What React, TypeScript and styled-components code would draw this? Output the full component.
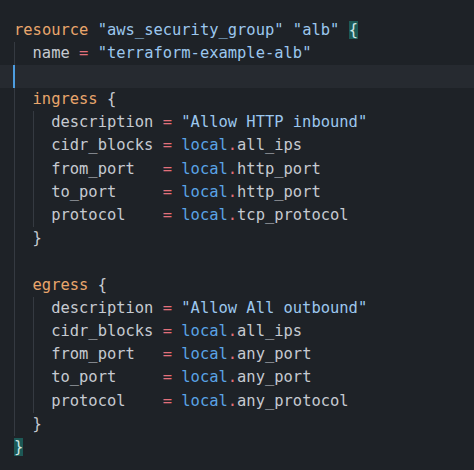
import React from "react";
import styled, { createGlobalStyle } from "styled-components";

const Global = createGlobalStyle`
  html, body { margin: 0; padding: 0; background: #1e2227; }
  #root { width: 474px; height: 470px; overflow: hidden; }
`;

const Editor = styled.div`
  box-sizing: border-box;
  width: 474px;
  height: 470px;
  background: #1e2227;
  padding: 18.5px 0 0 0;
  font-family: "DejaVu Sans Mono", "Liberation Mono", monospace;
  font-size: 15.45px;
  color: #c6cad1;
  white-space: pre;
`;

const Line = styled.div<{ $current?: boolean }>`
  position: relative;
  height: 23.2px;
  line-height: 23.2px;
  padding-left: 14px;
  background: ${(p) => (p.$current ? "#262a30" : "transparent")};
`;

const Indent = styled.span`
  display: inline-block;
  vertical-align: top;
  width: 2ch;
  height: 23.2px;
  box-sizing: border-box;
  border-left: 1px solid #353a41;
`;

const Cursor = styled.span`
  position: absolute;
  left: 13px;
  top: 0;
  width: 2px;
  height: 23.2px;
  background: #4d9de0;
`;

const Kw = styled.span`
  color: #e9a66c;
`;
const Str = styled.span`
  color: #9cc7ee;
`;
const Op = styled.span`
  color: #e2707a;
`;
const Local = styled.span`
  color: #5aa4e6;
`;
const Ident = styled.span`
  color: #c6cad1;
`;
const Match = styled.span`
  background: #1d5956;
  color: #cfe6e4;
`;

type Seg = React.ReactNode;

const attr = (name: string, pad: number, value: Seg) => (
  <>
    <Ident>{name.padEnd(pad, " ")}</Ident>
    <Op>{" = "}</Op>
    {value}
  </>
);

const loc = (name: string) => (
  <>
    <Local>local</Local>
    <Op>.</Op>
    <Ident>{name}</Ident>
  </>
);

const rows: { indent: number; content: Seg; current?: boolean }[] = [
  {
    indent: 0,
    content: (
      <>
        <Kw>resource</Kw>
        {" "}
        <Str>"aws_security_group"</Str>
        {" "}
        <Str>"alb"</Str>
        {" "}
        <Match>{"{"}</Match>
      </>
    ),
  },
  { indent: 1, content: attr("name", 4, <Str>"terraform-example-alb"</Str>) },
  { indent: 0, content: null, current: true },
  {
    indent: 1,
    content: (
      <>
        <Kw>ingress</Kw>
        <Ident>{" {"}</Ident>
      </>
    ),
  },
  { indent: 2, content: attr("description", 11, <Str>"Allow HTTP inbound"</Str>) },
  { indent: 2, content: attr("cidr_blocks", 11, loc("all_ips")) },
  { indent: 2, content: attr("from_port", 11, loc("http_port")) },
  { indent: 2, content: attr("to_port", 11, loc("http_port")) },
  { indent: 2, content: attr("protocol", 11, loc("tcp_protocol")) },
  { indent: 1, content: <Ident>{"}"}</Ident> },
  { indent: 1, content: null },
  {
    indent: 1,
    content: (
      <>
        <Kw>egress</Kw>
        <Ident>{" {"}</Ident>
      </>
    ),
  },
  { indent: 2, content: attr("description", 11, <Str>"Allow All outbound"</Str>) },
  { indent: 2, content: attr("cidr_blocks", 11, loc("all_ips")) },
  { indent: 2, content: attr("from_port", 11, loc("any_port")) },
  { indent: 2, content: attr("to_port", 11, loc("any_port")) },
  { indent: 2, content: attr("protocol", 11, loc("any_protocol")) },
  { indent: 1, content: <Ident>{"}"}</Ident> },
  { indent: 0, content: <Match>{"}"}</Match> },
];

export default function App() {
  return (
    <>
      <Global />
      <Editor>
        {rows.map((r, i) => (
          <Line key={i} $current={r.current}>
            {Array.from({ length: r.indent }).map((_, j) => (
              <Indent key={j} />
            ))}
            {r.content}
            {r.current && <Cursor />}
          </Line>
        ))}
      </Editor>
    </>
  );
}
